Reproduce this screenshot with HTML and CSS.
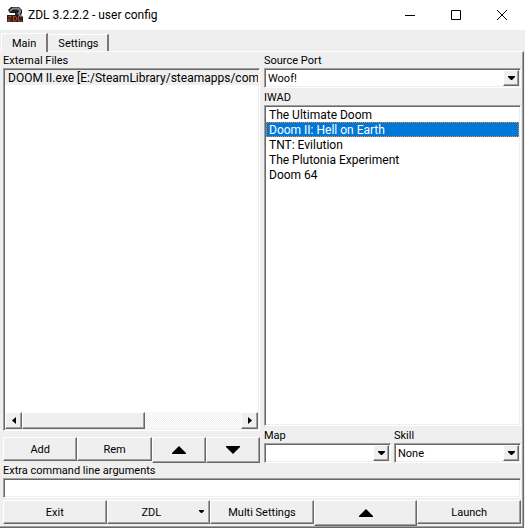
FILE: index.html
```html
<!DOCTYPE html>
<html lang="en">
<head>
<meta charset="utf-8">
<title>ZDL 3.2.2.2 - user config</title>
<link rel="stylesheet" href="styles.css">
</head>
<body>
<header class="titlebar">
  <svg class="logo" viewBox="0 0 16 16" aria-hidden="true">
    <path d="M1 3L4 0H12L15 3V6L14 8L16 10V15H8L7 11H5V8H8V6H3Z" fill="#161616"/>
    <path d="M3 4L6 1.500H11L13 3.500V5L11 7L13.500 9V12L12 14H9" fill="none" stroke="#85878a" stroke-width="2"/>
    <path d="M5 4H10V5L8 7H11V11" fill="none" stroke="#252525" stroke-width="1"/>
    <path d="M0 8H11L16 12V15H0Z" fill="#351c14"/>
    <path d="M1 9.500H4V10.500L1 13V14H4.500M6.500 9V14H8L9.500 13V10.500L8 9.500H6M11.500 9V14H15" fill="none" stroke="#a5492e" stroke-width="1"/>
  </svg>
  <h1 class="title">ZDL 3.2.2.2 - user config</h1>
  <div class="window-controls">
    <button class="window-button" aria-label="Minimize"><svg viewBox="0 0 10 10"><path d="M0 5.500H10"/></svg></button>
    <button class="window-button" aria-label="Maximize"><svg viewBox="0 0 10 10"><path d="M.5.5H9.500V9.500H.5Z"/></svg></button>
    <button class="window-button" aria-label="Close"><svg viewBox="0 0 10 10"><path d="M0 0L10 10M10 0L0 10"/></svg></button>
  </div>
</header>
<nav class="tabs" role="tablist">
  <button class="tab tab-active" role="tab" aria-selected="true">Main</button>
  <button class="tab" role="tab" aria-selected="false">Settings</button>
</nav>
<main class="pane">
  <div class="columns">
    <section class="column">
      <h2 class="label" id="files-label">External Files</h2>
      <div class="sunken list">
        <ul class="items" role="listbox" aria-labelledby="files-label">
          <li class="item item-alternate" role="option">DOOM II.exe [E:/SteamLibrary/steamapps/comm</li>
        </ul>
        <div class="scrollbar">
          <button class="raised scroll-button" aria-label="Scroll left"><svg width="4" height="7" viewBox="0 0 4 7"><path d="M4 0V7L0 3.500Z"/></svg></button>
          <div class="track"><div class="raised thumb"></div></div>
          <button class="raised scroll-button" aria-label="Scroll right"><svg width="4" height="7" viewBox="0 0 4 7"><path d="M0 0V7L4 3.500Z"/></svg></button>
        </div>
      </div>
      <div class="file-actions">
        <button class="raised push text-action">Add</button>
        <button class="raised push text-action">Rem</button>
        <button class="raised push icon-action" aria-label="Move up"><svg width="14" height="8" viewBox="0 0 14 8"><path d="M7 0L14 7V8H0V7Z"/></svg></button>
        <button class="raised push icon-action" aria-label="Move down"><svg width="14" height="8" viewBox="0 0 14 8"><path d="M0 0H14V1L7 8L0 1Z"/></svg></button>
      </div>
    </section>
    <section class="column">
      <label class="label" for="port">Source Port</label>
      <div class="sunken combo">
        <select id="port"><option>Woof!</option></select>
        <span class="raised drop"><svg width="7" height="4" viewBox="0 0 7 4"><path d="M0 0H7V1L4 4H3L0 1Z"/></svg></span>
      </div>
      <h2 class="label label-spaced" id="iwad-label">IWAD</h2>
      <div class="sunken list">
        <ul class="items" role="listbox" aria-labelledby="iwad-label">
          <li class="item" role="option">The Ultimate Doom</li>
          <li class="item item-selected" role="option" aria-selected="true">Doom II: Hell on Earth</li>
          <li class="item" role="option">TNT: Evilution</li>
          <li class="item" role="option">The Plutonia Experiment</li>
          <li class="item" role="option">Doom 64</li>
        </ul>
      </div>
      <div class="game-options">
        <div class="field">
          <label class="label" for="map">Map</label>
          <div class="sunken combo">
            <select id="map"><option></option></select>
            <span class="raised drop"><svg width="7" height="4" viewBox="0 0 7 4"><path d="M0 0H7V1L4 4H3L0 1Z"/></svg></span>
          </div>
        </div>
        <div class="field">
          <label class="label" for="skill">Skill</label>
          <div class="sunken combo">
            <select id="skill"><option>None</option></select>
            <span class="raised drop"><svg width="7" height="4" viewBox="0 0 7 4"><path d="M0 0H7V1L4 4H3L0 1Z"/></svg></span>
          </div>
        </div>
      </div>
    </section>
  </div>
  <label class="label" for="arguments">Extra command line arguments</label>
  <input class="sunken arguments" id="arguments" type="text">
  <footer class="actions">
    <button class="raised push">Exit</button>
    <button class="raised push menu-button"><span>ZDL</span><svg class="menu-arrow" width="5" height="3" viewBox="0 0 5 3"><path d="M0 0H5V1L3 3H2L0 1Z"/></svg></button>
    <button class="raised push">Multi Settings</button>
    <button class="raised push tall" aria-label="Expand"><svg width="14" height="8" viewBox="0 0 14 8"><path d="M7 0L14 7V8H0V7Z"/></svg></button>
    <button class="raised push">Launch</button>
  </footer>
</main>
</body>
</html>
```
FILE: styles.css
```css
* {
  box-sizing: border-box;
}

body {
  display: flex;
  flex-direction: column;
  min-height: 100vh;
  margin: 0;
  background: #efefef;
  color: #000;
  font: 11px/14px Roboto, "Liberation Sans", sans-serif;
}

button,
select,
input {
  margin: 0;
  padding: 0;
  border: 0;
  border-radius: 0;
  background: #efefef;
  color: inherit;
  font: inherit;
}

svg {
  display: block;
  flex: none;
}

.titlebar {
  display: flex;
  align-items: center;
  height: 30px;
  padding-left: 7px;
  background: #fff;
}

.logo {
  width: 16px;
  height: 16px;
}

.title {
  flex: 1;
  margin: 0 0 0 5px;
  font-size: 12px;
  font-weight: 400;
  line-height: 16px;
}

.window-controls {
  display: flex;
}

.window-button {
  display: grid;
  place-items: center;
  width: 46px;
  height: 28px;
  background: #fff;
}

.window-button svg {
  width: 10px;
  height: 10px;
  overflow: visible;
  fill: none;
  stroke: #000;
  stroke-width: 1;
}

.tabs {
  display: flex;
  align-items: flex-end;
  height: 21px;
  padding-left: 1px;
}

.tab {
  height: 17px;
  padding: 2px 8px 0 10px;
  border-top: 1px solid #fff;
  border-right: 2px solid #777;
  border-top-left-radius: 2px;
}

.tab-active {
  position: relative;
  height: 19px;
  margin-bottom: -1px;
  padding-right: 10px;
  border-left: 1px solid #fff;
}

.pane {
  display: flex;
  flex: 1;
  flex-direction: column;
  margin-right: 1px;
  padding: 1px 2px 1px 3px;
  border: 1px solid;
  border-color: #fff #696969 #696969 #fff;
  border-left-width: 0;
  box-shadow: inset -1px -1px #a0a0a0;
}

.columns {
  display: grid;
  flex: 1;
  grid-template-columns: minmax(0, 1fr) minmax(0, 1fr);
  gap: 4px;
}

.column {
  display: flex;
  flex-direction: column;
}

.label {
  display: block;
  margin: 0;
  font-size: 11px;
  font-weight: 400;
  line-height: 15px;
  white-space: nowrap;
}

.label-spaced {
  margin-top: 2px;
}

.sunken {
  border: 1px solid;
  border-color: #a0a0a0 #fff #fff #a0a0a0;
  background: #fff;
  box-shadow: inset 1px 1px #696969, inset -1px -1px #efefef;
}

.raised {
  border: 1px solid;
  border-color: #fff #696969 #696969 #fff;
  background: #efefef;
  box-shadow: inset -1px -1px #a0a0a0;
}

.list {
  display: flex;
  flex: 1;
  flex-direction: column;
  padding: 1px;
}

.items {
  flex: 1;
  margin: 0;
  padding: 0;
  overflow: hidden;
  list-style: none;
}

.item {
  height: 15px;
  padding: 0 2px;
  border: 1px solid transparent;
  font-size: 12px;
  line-height: 14px;
  white-space: nowrap;
}

.item-alternate {
  background: #efefef;
}

.item-selected {
  border: 1px dotted #ff8728;
  background: #0078d7;
  color: #fff;
}

.scrollbar {
  display: flex;
  height: 17px;
}

.scroll-button {
  display: grid;
  place-items: center;
  width: 17px;
}

.track {
  flex: 1;
  background: repeating-conic-gradient(#efefef 0 25%, #fff 0 50%) 0 0 / 2px 2px;
}

.thumb {
  width: 56%;
  height: 100%;
}

.file-actions {
  display: flex;
  align-items: flex-start;
  margin-top: 6px;
}

.push {
  display: flex;
  align-items: center;
  justify-content: center;
  height: 24px;
  padding-top: 2px;
}

.text-action {
  flex: 75;
}

.icon-action {
  flex: 54;
  height: 26px;
}

.combo {
  display: flex;
  height: 20px;
  padding: 1px;
  position: relative;
}

.combo select {
  width: 100%;
  padding: 2px 18px 0 2px;
  appearance: none;
  background: #fff;
}

.drop {
  display: grid;
  place-items: center;
  position: absolute;
  top: 1px;
  right: 1px;
  bottom: 1px;
  width: 16px;
  pointer-events: none;
}

.game-options {
  display: grid;
  grid-template-columns: 1fr 1fr;
  gap: 3px;
  margin-top: 2px;
}

.arguments {
  width: 100%;
  height: 20px;
  padding: 0 4px;
}

.actions {
  display: grid;
  grid-template-columns: repeat(5, 1fr);
  align-items: start;
  height: 26px;
  margin-top: 2px;
}

.menu-button {
  position: relative;
  padding-right: 14px;
}

.menu-arrow {
  position: absolute;
  top: 9px;
  right: 5px;
}

.icon-action,
.tall {
  height: 26px;
  padding-top: 0;
}
```
